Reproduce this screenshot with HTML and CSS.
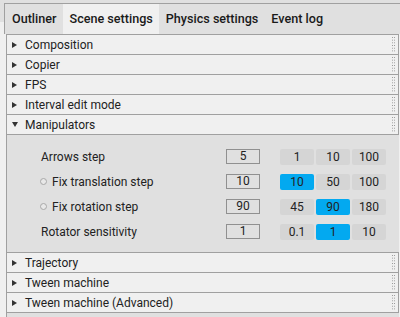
FILE: index.html
```html
<!DOCTYPE html>
<html lang="en">
<head>
    <meta charset="UTF-8">
    <title>Scene settings</title>
    <link rel="stylesheet" href="styles.css">
</head>
<body>
    <div class="tabs">
        <div class="tab">Outliner</div>
        <div class="tab active">Scene settings</div>
        <div class="tab">Physics settings</div>
        <div class="tab">Event log</div>
    </div>
    <div class="panel">
        <div class="head"><span class="arrow"></span>Composition<span class="grip"></span></div>
        <div class="head"><span class="arrow"></span>Copier<span class="grip"></span></div>
        <div class="head"><span class="arrow"></span>FPS<span class="grip"></span></div>
        <div class="head"><span class="arrow"></span>Interval edit mode<span class="grip"></span></div>
        <div class="head open"><span class="arrow"></span>Manipulators<span class="grip"></span></div>
        <div class="body">
            <div class="row">
                <div class="label">Arrows step</div>
                <div class="box">5</div>
                <div class="presets">
                    <span class="btn">1</span><span class="btn">10</span><span class="btn">100</span>
                </div>
            </div>
            <div class="row">
                <div class="label"><span class="radio"></span>Fix translation step</div>
                <div class="box">10</div>
                <div class="presets">
                    <span class="btn on">10</span><span class="btn">50</span><span class="btn">100</span>
                </div>
            </div>
            <div class="row">
                <div class="label"><span class="radio"></span>Fix rotation step</div>
                <div class="box">90</div>
                <div class="presets">
                    <span class="btn">45</span><span class="btn on">90</span><span class="btn">180</span>
                </div>
            </div>
            <div class="row">
                <div class="label">Rotator sensitivity</div>
                <div class="box">1</div>
                <div class="presets">
                    <span class="btn">0.1</span><span class="btn on">1</span><span class="btn">10</span>
                </div>
            </div>
        </div>
        <div class="head"><span class="arrow"></span>Trajectory<span class="grip"></span></div>
        <div class="head"><span class="arrow"></span>Tween machine<span class="grip"></span></div>
        <div class="head"><span class="arrow"></span>Tween machine (Advanced)<span class="grip"></span></div>
    </div>
</body>
</html>
```

FILE: styles.css
```css
* { margin: 0; padding: 0; box-sizing: border-box; }
body {
    font-family: Roboto, sans-serif;
    font-size: 12px;
    color: #222;
    background: linear-gradient(#e0e0e0 22px, #f0f0f0 22px);
    height: 100vh;
    overflow: hidden;
    display: flex;
    flex-direction: column;
}
.tabs {
    display: flex;
    margin: 3px 0 0 4px;
    height: 31px;
    border-top: 1px solid #a0a0a0;
    border-left: 1px solid #a0a0a0;
    background: #e0e0e0;
}
.tab {
    padding: 0 6px 0 7px;
    font-size: 12.6px;
    font-weight: 500;
    color: #1a1a1a;
    line-height: 30px;
}
.tab.active {
    background: #f0f0f0;
}
.panel {
    flex: 1;
    margin: 0 1px 0 6px;
    border-top: 1px solid #a0a0a0;
    border-left: 1px solid #a0a0a0;
    background: #e0e0e0;
}
.head {
    display: flex;
    align-items: center;
    height: 20px;
    padding-left: 5px;
    background: #f0f0f0;
    border-bottom: 1px solid #a0a0a0;
    border-right: 1px solid #a0a0a0;
}
.arrow {
    width: 0;
    height: 0;
    margin-right: 8px;
    border-left: 5px solid #333;
    border-top: 3px solid transparent;
    border-bottom: 3px solid transparent;
}
.head.open .arrow {
    border-left: 3px solid transparent;
    border-right: 3px solid transparent;
    border-top: 5px solid #333;
    border-bottom: 0;
    margin-right: 7px;
}
.grip {
    margin-left: auto;
    margin-right: 3px;
    width: 3px;
    height: 15px;
    background-image: linear-gradient(90deg, #999 1px, transparent 1px, transparent 2px, #999 2px);
    -webkit-mask-image: linear-gradient(#000 1px, transparent 1px);
    -webkit-mask-size: 3px 2.7px;
}
.body {
    padding: 9px 0 8px 34px;
    border-bottom: 1px solid #a0a0a0;
}
.row {
    display: flex;
    align-items: center;
    height: 25px;
}
.label {
    width: 185px;
    display: flex;
    align-items: center;
}
.radio {
    width: 7px;
    height: 7px;
    margin: 0 5px 0 -1px;
    border: 1px solid #a8a8a8;
    border-radius: 50%;
    background: #e8e8e8;
}
.box {
    width: 34px;
    height: 15px;
    border: 1px solid #909090;
    text-align: center;
    line-height: 13px;
    margin-right: 20px;
}
.presets {
    display: flex;
    gap: 2px;
}
.btn {
    width: 34px;
    height: 16px;
    line-height: 16px;
    text-align: center;
    background: #d5d5d5;
    border-radius: 2px;
}
.btn.on {
    background: #03a9f0;
}
```
